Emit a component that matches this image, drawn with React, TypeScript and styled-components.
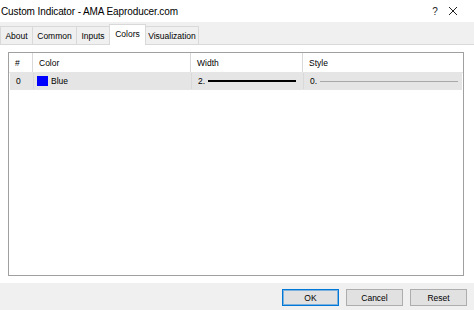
import React from 'react';
import styled, { createGlobalStyle } from 'styled-components';

const GlobalStyle = createGlobalStyle`
  html, body {
    margin: 0;
    padding: 0;
    background: #ffffff;
  }
  body {
    font-family: 'Liberation Sans', Arial, sans-serif;
    color: #000000;
  }
`;

const Window = styled.div`
  display: flex;
  flex-direction: column;
  width: 474px;
  height: 310px;
  overflow: hidden;
  background: #ffffff;
`;

const TitleBar = styled.div`
  display: flex;
  align-items: center;
  height: 22px;
  padding-left: 1px;
  background: #ffffff;
  .title {
    flex: 1;
    font-size: 10px;
    letter-spacing: -0.1px;
  }
`;

const TitleButton = styled.div<{ $width: number }>`
  display: flex;
  justify-content: center;
  align-items: center;
  width: ${(p) => p.$width}px;
  height: 22px;
  font-size: 10px;
  color: #222222;
`;

const TabStrip = styled.div`
  display: flex;
  align-items: flex-end;
  height: 23px;
  background: #f0f0f0;
  border-bottom: 1px solid #d9d9d9;
  box-sizing: border-box;
`;

const Tab = styled.div<{ $width: number; $active?: boolean }>`
  display: flex;
  justify-content: center;
  align-items: center;
  box-sizing: border-box;
  width: ${(p) => p.$width}px;
  height: ${(p) => (p.$active ? 21 : 18)}px;
  margin-left: -1px;
  margin-bottom: ${(p) => (p.$active ? -1 : 0)}px;
  padding-bottom: ${(p) => (p.$active ? 3 : 0)}px;
  border: 1px solid #d9d9d9;
  border-bottom: none;
  background: ${(p) => (p.$active ? '#ffffff' : '#f0f0f0')};
  font-size: 8.5px;
  position: relative;
  z-index: ${(p) => (p.$active ? 1 : 0)};
  &:first-child {
    margin-left: 0;
  }
`;

const Page = styled.div`
  flex: 1;
  display: flex;
  flex-direction: column;
  padding: 7px 10px 7px 8px;
  background: #ffffff;
`;

const Table = styled.div`
  flex: 1;
  border: 1px solid #a0a0a0;
  background: #ffffff;
`;

const Row = styled.div<{ $selected?: boolean }>`
  display: grid;
  grid-template-columns: 24px 158px 112px 1fr;
  height: ${(p) => (p.$selected ? 16 : 19)}px;
  margin: ${(p) => (p.$selected ? '0 1px 0 1px' : '0')};
  background: ${(p) => (p.$selected ? '#e5e5e5' : '#ffffff')};
  border-bottom: 1px solid ${(p) => (p.$selected ? '#e5e5e5' : '#e5e5e5')};
`;

const Cell = styled.div<{ $last?: boolean }>`
  display: flex;
  align-items: center;
  padding-left: 6px;
  font-size: 8.5px;
  border-right: ${(p) => (p.$last ? 'none' : '1px solid #d9d9d9')};
  overflow: hidden;
  white-space: nowrap;
`;

const Swatch = styled.span`
  display: inline-block;
  width: 11px;
  height: 10px;
  margin-right: 3px;
  background: #0000ff;
`;

const LineSample = styled.span<{ $thick: number; $color: string; $right: number }>`
  flex: 1;
  height: ${(p) => p.$thick}px;
  margin-left: 3px;
  margin-right: ${(p) => p.$right}px;
  background: ${(p) => p.$color};
`;

const Footer = styled.div`
  display: flex;
  justify-content: flex-end;
  align-items: flex-start;
  gap: 7px;
  height: 27px;
  padding: 6px 7px 0 0;
  box-sizing: border-box;
  background: #f0f0f0;
`;

const Button = styled.button<{ $default?: boolean }>`
  width: 57px;
  height: 17px;
  padding: 0;
  box-sizing: border-box;
  font-family: 'Liberation Sans', Arial, sans-serif;
  font-size: 8.5px;
  color: #000000;
  background: #e1e1e1;
  border: 1px solid ${(p) => (p.$default ? '#0078d7' : '#adadad')};
  box-shadow: ${(p) => (p.$default ? 'inset 0 0 0 1px rgba(0,120,215,0.45)' : 'none')};
`;

const CloseIcon = () => (
  <svg width="10" height="10" viewBox="0 0 10 10">
    <path d="M1 1 L9 9 M9 1 L1 9" stroke="#222" strokeWidth="1" fill="none" />
  </svg>
);

const tabs = [
  { label: 'About', width: 33 },
  { label: 'Common', width: 45 },
  { label: 'Inputs', width: 34 },
  { label: 'Colors', width: 37, active: true },
  { label: 'Visualization', width: 54 },
];

const App = () => {
  return (
    <>
      <GlobalStyle />
      <Window>
        <TitleBar>
          <span className="title">Custom Indicator - AMA Eaproducer.com</span>
          <TitleButton $width={14}>?</TitleButton>
          <TitleButton $width={22}>
            <CloseIcon />
          </TitleButton>
          <TitleButton $width={10} />
        </TitleBar>
        <TabStrip>
          {tabs.map((t) => (
            <Tab key={t.label} $width={t.width} $active={t.active}>
              {t.label}
            </Tab>
          ))}
        </TabStrip>
        <Page>
          <Table>
            <Row>
              <Cell>#</Cell>
              <Cell>Color</Cell>
              <Cell>Width</Cell>
              <Cell $last>Style</Cell>
            </Row>
            <Row $selected>
              <Cell>0</Cell>
              <Cell style={{ paddingLeft: 3 }}>
                <Swatch />
                Blue
              </Cell>
              <Cell>
                2.
                <LineSample $thick={2} $color="#000000" $right={7} />
              </Cell>
              <Cell $last>
                0.
                <LineSample $thick={1} $color="#a8a8a8" $right={4} />
              </Cell>
            </Row>
          </Table>
        </Page>
        <Footer>
          <Button $default>OK</Button>
          <Button>Cancel</Button>
          <Button>Reset</Button>
        </Footer>
      </Window>
    </>
  );
};

export default App;
